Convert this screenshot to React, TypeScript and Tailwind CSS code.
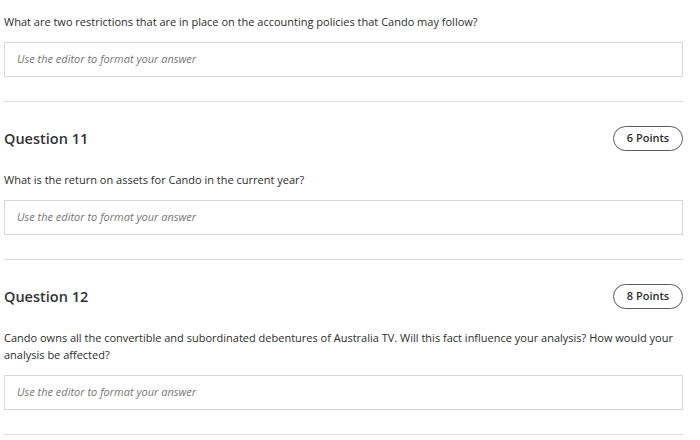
import React from 'react'

const font = { fontFamily: '"Open Sans", "Noto Sans", sans-serif' }

const AnswerBox = () => (
  <div className="h-[35px] border border-[#d6d6d6] flex items-center px-3">
    <span className="text-[11px] italic text-[#777]">Use the editor to format your answer</span>
  </div>
)

const Divider = () => <div className="h-px bg-[#dcdcdc] mt-[24px]" />

interface QuestionProps {
  number: number
  points: number
  text: string
}

const Question = ({ number, points, text }: QuestionProps) => (
  <div className="pt-[24px]">
    <div className="flex items-center justify-between h-[25px]">
      <h2 className="text-[14.5px] font-semibold text-[#333]">Question {number}</h2>
      <span className="h-[25px] w-[70px] rounded-full border border-[#5a5a5a] flex items-center justify-center text-[11px] font-semibold text-[#2d2d2d]">
        {points} Points
      </span>
    </div>
    <p className="mt-[20px] text-[11px] leading-[17px] text-[#2d2d2d]">{text}</p>
    <div className="mt-[12px]">
      <AnswerBox />
    </div>
    <Divider />
  </div>
)

export default function App() {
  return (
    <div className="w-[700px] h-[440px] bg-white overflow-hidden" style={font}>
      <div className="w-[679px] ml-[4px]">
        <p className="pt-[13px] text-[11px] leading-[18px] text-[#2d2d2d]">
          What are two restrictions that are in place on the accounting policies that Cando may follow?
        </p>
        <div className="mt-[11px]">
          <AnswerBox />
        </div>
        <Divider />
        <Question number={11} points={6} text="What is the return on assets for Cando in the current year?" />
        <Question
          number={12}
          points={8}
          text="Cando owns all the convertible and subordinated debentures of Australia TV. Will this fact influence your analysis? How would your analysis be affected?"
        />
      </div>
    </div>
  )
}
